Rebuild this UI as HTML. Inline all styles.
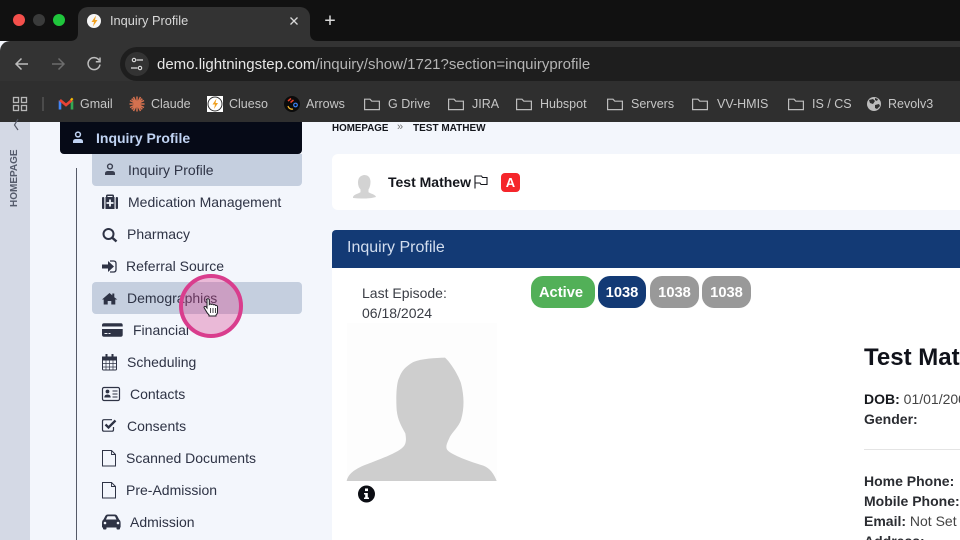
<!DOCTYPE html>
<html><head><meta charset="utf-8"><title>Inquiry Profile</title>
<style>
html,body{margin:0;padding:0;width:960px;height:540px;overflow:hidden;background:#f3f6fc;font-family:"Liberation Sans",sans-serif}
#w{position:relative;width:960px;height:540px;overflow:hidden;background:#f3f6fc}
.a{position:absolute}
.t{position:absolute;white-space:nowrap;line-height:1}
.m{font-size:14px;color:#2e3345}
.b{font-size:12.5px;color:#c6c6c6}
.p{position:absolute;top:276px;height:32px;border-radius:12px;color:#fff;font-weight:bold;font-size:14.7px;line-height:35px;text-align:center}
.l{font-size:14px;color:#16181d}
.k{font-weight:bold}
svg{position:absolute;left:0;top:0}
</style></head><body><div id="w">
<!-- browser chrome -->
<div class="a" style="left:0;top:0;width:960px;height:41px;background:#111"></div>
<div class="a" style="left:0;top:41px;width:960px;height:40px;background:#333;border-radius:10px 0 0 0"></div>
<div class="a" style="left:0;top:81px;width:960px;height:41px;background:#2f2f2f"></div>
<div class="a" style="left:78px;top:7px;width:232px;height:34px;background:#333;border-radius:10px 10px 0 0"></div>
<div class="a" style="left:120px;top:47px;width:860px;height:34px;background:#1e1e1e;border-radius:17px"></div>
<div class="t" style="left:110px;top:14.500px;font-size:12.800px;color:#d8d8d8">Inquiry Profile</div>
<div class="t" style="left:157px;top:56.500px;font-size:15px;color:#e6e6e6">demo.lightningstep.com<span style="color:#b4b4b4">/inquiry/show/1721?section=inquiryprofile</span></div>
<div class="t b" style="left:80px;top:97.500px">Gmail</div>
<div class="t b" style="left:151px;top:97.500px">Claude</div>
<div class="t b" style="left:229px;top:97.500px">Clueso</div>
<div class="t b" style="left:306px;top:97.500px">Arrows</div>
<div class="t b" style="left:388px;top:97.500px">G Drive</div>
<div class="t b" style="left:472px;top:97.500px">JIRA</div>
<div class="t b" style="left:540px;top:97.500px">Hubspot</div>
<div class="t b" style="left:631px;top:97.500px">Servers</div>
<div class="t b" style="left:717px;top:97.500px">VV-HMIS</div>
<div class="t b" style="left:812px;top:97.500px">IS / CS</div>
<div class="t b" style="left:888px;top:97.500px">Revolv3</div>
<!-- sidebar -->
<div class="a" style="left:0;top:122px;width:30px;height:418px;background:#d4d9e5"></div>
<div class="t" style="left:-13px;top:174px;font-size:10px;font-weight:bold;color:#555b6b;transform:rotate(-90deg);width:56px;text-align:center">HOMEPAGE</div>
<div class="a" style="left:60px;top:122px;width:242px;height:32px;background:#060a17;border-radius:0 0 4px 4px"></div>
<div class="t" style="left:96px;top:131px;font-size:14px;font-weight:bold;color:#c0d3f3">Inquiry Profile</div>
<div class="a" style="left:92px;top:154px;width:210px;height:32px;background:#c5cfdf;border-radius:0 0 4px 4px"></div>
<div class="a" style="left:92px;top:282px;width:210px;height:32px;background:#c5cfdf;border-radius:4px"></div>
<div class="a" style="left:76px;top:168px;width:1px;height:372px;background:#555a68"></div>
<div class="t m" style="left:128px;top:163px">Inquiry Profile</div>
<div class="t m" style="left:128px;top:195px">Medication Management</div>
<div class="t m" style="left:127px;top:227px">Pharmacy</div>
<div class="t m" style="left:126px;top:259px">Referral Source</div>
<div class="t m" style="left:127px;top:291px">Demographics</div>
<div class="t m" style="left:133px;top:323px">Financial</div>
<div class="t m" style="left:127px;top:355px">Scheduling</div>
<div class="t m" style="left:130px;top:387px">Contacts</div>
<div class="t m" style="left:127px;top:419px">Consents</div>
<div class="t m" style="left:126px;top:451px">Scanned Documents</div>
<div class="t m" style="left:126px;top:483px">Pre-Admission</div>
<div class="t m" style="left:130px;top:515px">Admission</div>
<!-- main -->
<div class="t" style="left:332px;top:123.500px;font-size:9.800px;font-weight:bold;color:#14161c">HOMEPAGE</div>
<div class="t" style="left:397px;top:122px;font-size:11px;color:#777">»</div>
<div class="t" style="left:413px;top:123.500px;font-size:10px;font-weight:bold;color:#14161c">TEST MATHEW</div>
<div class="a" style="left:332px;top:154px;width:640px;height:56px;background:#fff;border-radius:6px"></div>
<div class="t" style="left:388px;top:175px;font-size:14px;font-weight:bold;color:#14161c">Test Mathew</div>
<div class="a" style="left:501px;top:173px;width:19px;height:19px;background:#f5262b;border-radius:4px;color:#fff;font-weight:bold;font-size:13px;line-height:19px;text-align:center">A</div>
<div class="a" style="left:332px;top:230px;width:640px;height:320px;background:#fff;border-radius:4px 0 0 0;overflow:hidden"><div style="height:38px;background:#133a75"></div></div>
<div class="t" style="left:347px;top:240px;font-size:16px;color:#d3deef">Inquiry Profile</div>
<div class="t" style="left:362px;top:286px;font-size:14px;color:#3a3d45">Last Episode:</div>
<div class="t" style="left:362px;top:306px;font-size:14px;color:#3a3d45">06/18/2024</div>
<div class="p" style="left:531px;width:60px;padding-right:4px;background:#52b058">Active</div>
<div class="p" style="left:598px;width:48px;background:#133a75">1038</div>
<div class="p" style="left:650px;width:49px;background:#999">1038</div>
<div class="p" style="left:702px;width:49px;background:#999">1038</div>
<div class="a" style="left:347px;top:323px;width:150px;height:158px;background:#fdfdfd"></div>
<div class="t" style="left:864px;top:345.500px;font-size:24px;font-weight:bold;color:#10121a">Test Mathew</div>
<div class="t l" style="left:864px;top:392px"><span class="k">DOB:</span> <span style="color:#444">01/01/2000</span></div>
<div class="t l" style="left:864px;top:412px"><span class="k" style="color:#2a2c31">Gender:</span></div>
<div class="a" style="left:864px;top:449px;width:96px;height:1px;background:#e4e4e4"></div>
<div class="t l" style="left:864px;top:474px"><span class="k" style="color:#2a2c31">Home Phone:</span></div>
<div class="t l" style="left:864px;top:494px"><span class="k" style="color:#2a2c31">Mobile Phone:</span></div>
<div class="t l" style="left:864px;top:514px"><span class="k" style="color:#2a2c31">Email:</span> <span style="color:#444">Not Set</span></div>
<div class="t l" style="left:864px;top:534px"><span class="k" style="color:#2a2c31">Address:</span></div>

<svg width="960" height="540" viewBox="0 0 960 540" fill="none">
<!-- traffic lights -->
<circle cx="19" cy="20" r="6" fill="#f4504c"/><circle cx="39" cy="20" r="6" fill="#3a3b3b"/><circle cx="59" cy="20" r="6" fill="#1fc63c"/>
<!-- tab -->
<path d="M78 41h-8q8 0 8-8zM310 41h8q-8 0-8-8z" fill="#333"/>
<circle cx="94" cy="21" r="7" fill="#f6f6f6"/><path d="M96 15.500l-4.500 6.500h2.500l-1 4.500 4.500-6.500h-2.500z" fill="#f0a020"/>
<path d="M290.500 17.500l7 7m0-7l-7 7" stroke="#d8d8d8" stroke-width="1.300"/>
<path d="M330 15.500v9.500M325.200 20.200h9.600" stroke="#d8d8d8" stroke-width="1.500"/>
<!-- nav -->
<path d="M28 64H16.500M21.500 58.500L16 64l5.500 5.500" stroke="#bdbdbd" stroke-width="1.500"/>
<path d="M52 64h11.500M58.500 58.500L64 64l-5.500 5.500" stroke="#6d6d6d" stroke-width="1.500"/>
<path d="M99.200 60.500A6 6 0 1 0 100 64.500" stroke="#bdbdbd" stroke-width="1.500"/><path d="M100 57.500v4.200h-4.200" stroke="#bdbdbd" stroke-width="1.500"/>
<circle cx="137" cy="64" r="12" fill="#333"/>
<circle cx="134" cy="60" r="1.700" stroke="#ddd" stroke-width="1.100"/><path d="M136.500 60h6.500M131 68h6.500" stroke="#ddd" stroke-width="1.200"/><circle cx="140" cy="68" r="1.700" stroke="#ddd" stroke-width="1.100"/>
<!-- bookmarks -->
<g stroke="#b8b8b8" stroke-width="1.300"><rect x="13.500" y="97.500" width="5" height="5"/><rect x="21.500" y="97.500" width="5" height="5"/><rect x="13.500" y="105.500" width="5" height="5"/><rect x="21.500" y="105.500" width="5" height="5"/></g>
<path d="M43 97v14" stroke="#555" stroke-width="1.500"/>
<path d="M60 109.500V100.500" stroke="#4285f4" stroke-width="2.600"/><path d="M72 109.500V100.500" stroke="#34a853" stroke-width="2.600"/><path d="M60 100l6 5 6-5" stroke="#ea4335" stroke-width="2.600"/><path d="M71 98.500l1.500 1.500" stroke="#fbbc04" stroke-width="2.600"/>
<g stroke="#d5714f" stroke-width="1.500"><path d="M137 96.500v15M129.500 104h15M131.700 98.700l10.600 10.600M142.300 98.700l-10.600 10.600M133.500 97l7 14M140.500 97l-7 14M130 100.500l14 7M144 100.500l-14 7"/></g><circle cx="137" cy="104" r="3.500" fill="#d5714f"/>
<rect x="207" y="96" width="16" height="16" fill="#fff"/><circle cx="215" cy="104" r="7" stroke="#333" stroke-width="1"/><path d="M216.500 98.500l-4 6h2.500l-1 4.500 4-6h-2.500z" fill="#f0a020"/>
<circle cx="292" cy="104" r="8" fill="#0b0b0b"/><path d="M288 101l3-2.500M290.500 102.500l3-2.500" stroke="#e8402a" stroke-width="1.500"/><circle cx="295.500" cy="105" r="1.800" stroke="#3b82f6" stroke-width="1.200"/><path d="M288 106a4 4 0 0 0 5 3" stroke="#f0b429" stroke-width="1.300"/>
<g stroke="#bcbcbc" stroke-width="1.200"><path d="M364.600 99.200h5.400l1.800 2h7.600v8.400h-14.800z"/><path d="M448.600 99.200h5.400l1.800 2h7.600v8.400h-14.800z"/><path d="M516.600 99.200h5.400l1.800 2h7.600v8.400h-14.800z"/><path d="M607.600 99.200h5.400l1.800 2h7.600v8.400h-14.800z"/><path d="M692.600 99.200h5.400l1.800 2h7.600v8.400h-14.800z"/><path d="M788.600 99.200h5.400l1.800 2h7.600v8.400h-14.800z"/></g>
<circle cx="874" cy="104" r="7" fill="#bcbcbc"/><path d="M869 100l4-1 2 2-2 3-3-1zM875 105l4-1 1 2-3 3-2-1zM875 98l3 1-1 2-2-1z" fill="#2f2f2f"/>
<!-- sidebar icons -->
<path d="M18 120l-3.500 6 3.500 5" stroke="#555a68" stroke-width="1.200" transform="translate(0,-1)"/>
<circle cx="78" cy="134.500" r="2.400" stroke="#c0d3f3" stroke-width="1.500"/><path d="M73 143v-1.500q0-2.300 2.500-2.500h5q2.500.200 2.500 2.500V143z" fill="#c0d3f3"/>
<circle cx="110" cy="166.500" r="2.400" stroke="#3a3f50" stroke-width="1.400"/><path d="M105 175v-1.500q0-2.300 2.500-2.500h5q2.500.200 2.500 2.500V175z" fill="#3a3f50"/>
<g fill="#2e3345"><path d="M106 198v-2q0-1.500 1.500-1.500h5q1.500 0 1.500 1.500v2h-1.500v-2h-5v2z"/><rect x="105.500" y="197" width="9" height="12"/><rect x="102" y="197" width="2.300" height="12" rx="1"/><rect x="115.700" y="197" width="2.300" height="12" rx="1"/></g><path d="M110 199.500v7M106.500 203h7" stroke="#f3f6fc" stroke-width="1.800"/>
<circle cx="108.500" cy="234" r="5" stroke="#2e3345" stroke-width="2"/><path d="M112 237.500l4.500 4" stroke="#2e3345" stroke-width="2.500"/>
<path d="M102 264.500h6v-3.500l6 5.500-6 5.500v-3.500h-6z" fill="#2e3345"/><path d="M110 261h3.500q2.500 0 2.500 2.500v6q0 2.500-2.500 2.500H110" stroke="#2e3345" stroke-width="1.300"/>
<path d="M102 299.500l7.500-6.500 2.800 2.400V293.500h2v3.700l3 2.300h-2v5h-4v-3.500h-3.600v3.500h-4v-5z" fill="#2e3345"/>
<path d="M102 325.300q0-2 2-2h17q1.700 0 1.700 2v1.200h-20.700zM102 329h20.700v5.700q0 2-2 2h-16.700q-2 0-2-2z" fill="#2e3345"/><path d="M104.500 333.500h3M108.500 333.500h2" stroke="#f3f6fc" stroke-width="1"/>
<g stroke="#2e3345"><rect x="102.500" y="357" width="14" height="13" rx="1" stroke-width="1"/><path d="M102.500 357h14v3h-14z" fill="#2e3345"/><path d="M106.500 354v4M112.500 354v4" stroke-width="2"/><path d="M102.500 363.500h14M102.500 367h14M106 360v10M109.500 360v10M113 360v10" stroke-width=".7"/></g>
<rect x="102.500" y="387.500" width="17" height="13" rx="1.500" stroke="#2e3345" stroke-width="1.200"/><circle cx="107.500" cy="391.500" r="1.900" fill="#2e3345"/><path d="M104.300 397.500q0-3 3.200-3t3.200 3z" fill="#2e3345"/><path d="M112.500 391h5M112.500 394h5M112.500 397h5" stroke="#2e3345" stroke-width="1"/>
<path d="M113.500 427v2.700q0 1.500-1.500 1.500H104q-1.500 0-1.500-1.500v-8.500q0-1.500 1.500-1.500h8" stroke="#2e3345" stroke-width="1.200"/><path d="M105.500 424.500l3 3 7-7" stroke="#2e3345" stroke-width="2.300"/>
<path d="M102.500 450.500h9l4 4v11.500h-13z" stroke="#2e3345" stroke-width="1"/><path d="M111.500 450.500v4h4" stroke="#2e3345" stroke-width=".9"/>
<path d="M102.500 482.500h9l4 4v11.500h-13z" stroke="#2e3345" stroke-width="1"/><path d="M111.500 482.500v4h4" stroke="#2e3345" stroke-width=".9"/>
<path d="M102 523q0-2.500 1.500-3.500l1.800-3.500q.8-1.500 2.500-1.500h7q1.700 0 2.500 1.500l1.800 3.500q1.500 1 1.500 3.500v4.500h-18.600z" fill="#2e3345"/><rect x="103" y="526" width="3.500" height="3.500" rx="1" fill="#2e3345"/><rect x="116.500" y="526" width="3.500" height="3.500" rx="1" fill="#2e3345"/><path d="M106 519.500l1.200-2.700q.3-.6 1-.6h6q.7 0 1 .6l1.200 2.700z" fill="#f3f6fc"/><circle cx="105" cy="523" r="1.300" fill="#f3f6fc"/><circle cx="118" cy="523" r="1.300" fill="#f3f6fc"/>
<!-- card avatar -->
<path d="M353 197q.5-2 5-3.500l2.500-1.300v-2.700q-2.500-2.500-2.500-7 0-6.500 6-7.500 6 0 6.500 6.500 0 5-2 8v2.700l2.500 1.300q4.500 1.500 5 3.500-6 1.800-11.500 1.500-5.500.200-11.500-.500z" fill="#d3d3d3"/>
<path d="M475 188.500v-13M475 176h6.500l1 1.500h4.500v7h-6l-1-1.500H475" stroke="#14161c" stroke-width="1.100"/>
<!-- large avatar -->
<svg x="330" y="320" width="200" height="220" viewBox="0 0 600 660"><path d="M50 483C54 466 66 452 100 437C130 424 190 405 215 385C228 375 230 362 226 340C214 318 203 300 200 270C198 240 198 190 208 172C214 155 225 140 250 126C275 116 315 114 345 113C362 128 385 165 393 190C402 225 404 262 393 300C385 322 368 335 360 350C352 368 345 380 352 390C365 405 420 425 460 437C480 445 492 462 500 483Z" fill="#cecece"/></svg>
<circle cx="366.500" cy="494" r="8.500" fill="#0c0e14"/><rect x="365" y="488.500" width="3" height="2.600" fill="#fff"/><path d="M364 493h3.800v4.500h1.200v1.500h-5v-1.500h1.200v-3h-1.200z" fill="#fff"/>
<!-- click highlight -->
<circle cx="211" cy="306" r="30" fill="#d93d8d" fill-opacity=".33" stroke="#d93d8d" stroke-width="4"/>
<path d="M206.500 299.500q1.500-1.500 2.800 0v5q1-1 2 0 1.200-.8 2.200.3 1.300-.6 2.200.7 1.300-.5 1.800 1v5q0 2.500-1.500 3.500v1h-7v-1q-2-2-3.500-5l-1.500-2.500q0-1.500 2-.8l1 1.300v-8z" fill="#fff" stroke="#1d1d22" stroke-width="1"/><path d="M210.500 308v5M213 308v5M215.500 308v5" stroke="#1d1d22" stroke-width=".8"/>
</svg>
</div></body></html>
